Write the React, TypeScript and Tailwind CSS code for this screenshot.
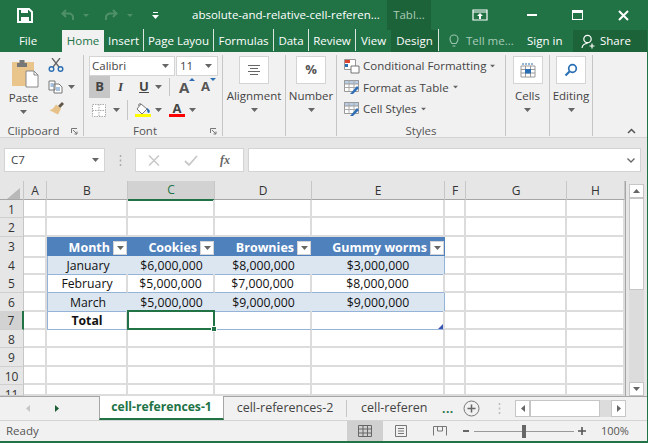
import * as React from "react";

const Caret = ({ className = "" }: { className?: string }) => (
  <svg width="7" height="4" viewBox="0 0 7 4" className={`shrink-0 ${className}`}>
    <path d="M0 0h7L3.500 4z" fill="#666" />
  </svg>
);

function Separator() {
  return <div className="w-px h-[22px] shrink-0 bg-[#d8e6de] self-end mb-[1px]" />;
}

function RibbonTab({ label, width, dark }: { label: string; width: string; dark?: boolean }) {
  return (
    <div className={`${width} shrink-0 flex items-center justify-center text-[11.500px] text-white whitespace-nowrap ${dark ? "bg-[#1d6339]" : ""}`}>
      {label}
    </div>
  );
}

function TitleBar() {
  return (
    <div className="h-[30px] shrink-0 flex items-center bg-[#217346] text-white">
      <svg width="16" height="15" viewBox="0 0 16 15" className="ml-[17px] shrink-0">
        <path d="M1 1h11l3 3v10H1z" fill="none" stroke="#fff" strokeWidth="2" />
        <rect x="4" y="1" width="7" height="4" fill="#fff" />
        <rect x="4" y="9" width="8" height="5" fill="#fff" />
      </svg>
      <svg width="14" height="12" viewBox="0 0 14 12" className="ml-[28px] shrink-0">
        <path d="M5 1 1.500 4.500 5 8M2 4.500h6a4 4 0 0 1 4 4V11" fill="none" stroke="#4f9069" strokeWidth="2" />
      </svg>
      <svg width="6" height="3" viewBox="0 0 6 3" className="ml-[8px] shrink-0"><path d="M0 0h6L3 3z" fill="#4f9069" /></svg>
      <svg width="14" height="12" viewBox="0 0 14 12" className="ml-[15px] shrink-0">
        <path d="M9 1l3.500 3.500L9 8M12 4.500H6a4 4 0 0 0-4 4V11" fill="none" stroke="#4f9069" strokeWidth="2" />
      </svg>
      <svg width="6" height="3" viewBox="0 0 6 3" className="ml-[9px] shrink-0"><path d="M0 0h6L3 3z" fill="#4f9069" /></svg>
      <svg width="7" height="7" viewBox="0 0 7 7" className="ml-[19px] shrink-0">
        <path d="M1 0h5v1H1zM0 3h7L3.500 7z" fill="#fff" />
      </svg>
      <div className="ml-[33px] w-[195px] shrink-0 text-[11.500px] whitespace-nowrap">absolute-and-relative-cell-referen...</div>
      <div className="w-[44px] h-full shrink-0 bg-[#1d6339] flex items-center justify-center text-[11.500px] text-[#a9cbb7]">Tabl...</div>
      <svg width="16" height="13" viewBox="0 0 16 13" className="ml-[41px] shrink-0">
        <path d="M1 1h14v10H1zM1 3h14" fill="none" stroke="#fff" strokeWidth="1.200" />
        <path d="M8 4l3 3H9v3H7V7H5z" fill="#fff" />
      </svg>
      <div className="ml-[39px] w-[10px] h-[2px] bg-white shrink-0" />
      <div className="ml-[35px] w-[11px] h-[10px] border border-white border-t-[3px] shrink-0" />
      <svg width="11" height="11" viewBox="0 0 11 11" className="ml-[35px] shrink-0">
        <path d="M1 1l9 9M10 1l-9 9" stroke="#fff" strokeWidth="2" />
      </svg>
    </div>
  );
}

function TabRow() {
  return (
    <div className="h-[22px] shrink-0 flex bg-[#217346] text-white">
      <RibbonTab label="File" width="w-[56px]" />
      <div className="w-[6px] shrink-0" />
      <div className="w-[42px] shrink-0 flex items-center justify-center text-[11.500px] text-[#217346] bg-[#f1f1f1]">Home</div>
      <RibbonTab label="Insert" width="w-[39px]" />
      <Separator />
      <RibbonTab label="Page Layou" width="w-[69px]" />
      <Separator />
      <RibbonTab label="Formulas" width="w-[59px]" />
      <Separator />
      <RibbonTab label="Data" width="w-[34px]" />
      <Separator />
      <RibbonTab label="Review" width="w-[46px]" />
      <Separator />
      <RibbonTab label="View" width="w-[35px]" />
      <RibbonTab label="Design" width="w-[47px]" dark />
      <Separator />
      <div className="w-[10px] shrink-0" />
      <svg width="10" height="14" viewBox="0 0 10 14" className="self-center shrink-0">
        <path d="M3 9.500C2 8 1 7.500 1 5a4 4 0 0 1 8 0c0 2.500-1 3-2 4.500zM3.500 12h3" fill="none" stroke="#9cc4ad" strokeWidth="1.100" />
      </svg>
      <div className="ml-[7px] w-[53px] shrink-0 text-[11.500px] text-[#a9cbb7] flex items-center whitespace-nowrap">Tell me...</div>
      <div className="ml-[8px] w-[46px] shrink-0 text-[11.500px] flex items-center whitespace-nowrap">Sign in</div>
      <div className="flex-1 h-full bg-[#1d6339] flex items-center gap-[4px] pl-[8px] text-[11.500px]">
        <svg width="15" height="15" viewBox="0 0 15 15" className="shrink-0">
          <circle cx="6.500" cy="5" r="3.700" fill="none" stroke="#fff" strokeWidth="1.200" />
          <path d="M1 14c.5-3 2-4.500 5.500-4.500M11 9.500v5M8.500 12h5" fill="none" stroke="#fff" strokeWidth="1.200" />
        </svg>
        Share
      </div>
    </div>
  );
}

const Launcher = () => (
  <svg width="7" height="7" viewBox="0 0 7 7" className="shrink-0">
    <path d="M.5 5V.5H6M2 2l4 4M6 3.500V6H3.500" fill="none" stroke="#777" strokeWidth="1" />
  </svg>
);

function Group({
  width,
  label,
  launcher,
  children,
}: {
  width: string;
  label: string;
  launcher?: boolean;
  children: React.ReactNode;
}) {
  return (
    <div className={`${width} shrink-0 flex flex-col border-r border-[#c6c6c6] mt-[3px] mb-[1px]`}>
      <div className="flex-1 min-h-0">{children}</div>
      <div className={`relative h-[10px] flex items-center justify-center text-[11.500px] leading-[10px] text-[#555] ${launcher ? "pr-[16px]" : ""}`}>
        {label}
        {launcher && (
          <div className="absolute right-[5px] top-[2px]">
            <Launcher />
          </div>
        )}
      </div>
    </div>
  );
}

function BigButton({ label, icon }: { label: string; icon: React.ReactNode }) {
  return (
    <div className="flex flex-col items-center pt-[1px]">
      <div className="w-[30px] h-[28px] bg-white border border-[#d4d4d4] flex items-center justify-center">{icon}</div>
      <div className="mt-[3px] text-[11.500px] leading-[17px] text-[#444] whitespace-nowrap">{label}</div>
      <Caret className="mt-[4px]" />
    </div>
  );
}

function ClipboardGroup() {
  return (
    <Group width="w-[84px]" label="Clipboard" launcher>
      <div className="flex h-full">
        <div className="w-[47px] flex flex-col items-center pt-[4px]">
          <svg width="29" height="29" viewBox="0 0 29 29" className="ml-[4px]">
            <rect x="1" y="3" width="22" height="24" fill="#e9c58c" />
            <path d="M6 8V4h2.500V1h5v3H16v4z" fill="#777" />
            <path d="M15 12h8l4 4v12H15z" fill="#fff" stroke="#888" />
            <path d="M23 12v4h4" fill="none" stroke="#888" />
          </svg>
          <div className="mt-[1px] text-[11.500px] leading-[17px] text-[#444]">Paste</div>
          <Caret className="mt-[4px]" />
        </div>
        <div className="flex flex-col pl-[1px] pt-[3px]">
          <svg width="16" height="14" viewBox="0 0 16 14">
            <path d="M4 0l7 9M12 0 5 9" stroke="#666" strokeWidth="1.300" />
            <circle cx="3.500" cy="11" r="2.300" fill="none" stroke="#2a6fb4" strokeWidth="1.400" />
            <circle cx="12.500" cy="11" r="2.300" fill="none" stroke="#2a6fb4" strokeWidth="1.400" />
          </svg>
          <div className="mt-[8px] flex items-center gap-[5px]">
            <svg width="15" height="14" viewBox="0 0 15 14">
              <path d="M1 1h6v9H1zM6 4h5l3 3v6H6z" fill="#fff" stroke="#777" />
              <path d="M2.500 4h3M2.500 6h3M8 8h4M8 10h4" stroke="#4a86c0" />
            </svg>
            <Caret />
          </div>
          <svg width="17" height="15" viewBox="0 0 17 15" className="mt-[7px]">
            <path d="M10 5l4-4 2 2-4 4z" fill="#5f5648" />
            <path d="M8 3.500l5 4-3 6-9-4.500c3 0 5-2 7-5.500z" fill="#e6c288" />
          </svg>
        </div>
      </div>
    </Group>
  );
}

function FontGroup() {
  return (
    <Group width="w-[139px]" label="Font" launcher>
      <div className="pl-[5px] pt-[1px]">
        <div className="flex gap-[1px] h-[20px]">
          <div className="w-[86px] bg-white border border-[#d4d4d4] flex items-center justify-between px-[2px] pr-[5px] text-[11.500px] text-[#444]">
            Calibri
            <Caret />
          </div>
          <div className="w-[42px] bg-white border border-[#d4d4d4] flex items-center justify-between px-[3px] pr-[5px] text-[11.500px] text-[#444]">
            11
            <Caret />
          </div>
        </div>
        <div className="flex items-center h-[22px] text-[#444]">
          <div className="w-[21px] h-[22px] bg-[#c6c6c6] flex items-center justify-center font-bold text-[13px]">B</div>
          <div className="w-[21px] text-center italic font-bold text-[13px] font-['Liberation_Serif',serif]">I</div>
          <div className="w-[22px] ml-[2px] text-center underline font-bold text-[13px]">U</div>
          <Caret />
          <div className="w-px h-[18px] ml-[7px] bg-[#c6c6c6]" />
          <div className="ml-[9px] w-[18px] text-[15px] font-bold flex items-start text-[#555]">
            A
            <svg width="6" height="3" viewBox="0 0 6 3" className="mt-[2px]"><path d="M3 0l3 3H0z" fill="#2a6fb4" /></svg>
          </div>
          <div className="ml-[4px] w-[16px] text-[13px] font-bold flex items-start text-[#555]">
            A
            <svg width="6" height="3" viewBox="0 0 6 3" className="mt-[1px]"><path d="M0 0h6L3 3z" fill="#2a6fb4" /></svg>
          </div>
        </div>
        <div className="flex items-center h-[24px]">
          <svg width="14" height="13" viewBox="0 0 14 13" className="ml-[3px]">
            <path d="M.5.500h13v12H.5zM7 .5v12M.5 6.500h13" fill="#fff" stroke="#aaa" strokeDasharray="1.500 1" />
          </svg>
          <Caret className="ml-[7px]" />
          <div className="w-px h-[20px] ml-[7px] bg-[#c6c6c6]" />
          <div className="ml-[7px] w-[16px] flex flex-col items-center">
            <svg width="16" height="11" viewBox="0 0 16 11">
              <path d="M6 1l6 5-5 5-5-5z" fill="#fff" stroke="#777" />
              <path d="M4 3c-1-1 0-3 2-2" fill="none" stroke="#777" />
              <path d="M12 5c2 1 3.500 3 2.500 4.500S11.500 9 12 5z" fill="#2a6fb4" />
            </svg>
            <div className="w-[16px] h-[3px] bg-[#ffff00]" />
          </div>
          <Caret className="ml-[4px]" />
          <div className="ml-[7px] w-[16px] flex flex-col items-center">
            <div className="text-[13px] leading-[11px] font-bold text-[#444]">A</div>
            <div className="w-[16px] h-[3px] bg-[#ff0000]" />
          </div>
          <Caret className="ml-[4px]" />
        </div>
      </div>
    </Group>
  );
}

function StyleRow({ label, icon }: { label: string; icon: React.ReactNode }) {
  return (
    <div className="h-[21.500px] flex items-center gap-[3px] text-[11.500px] text-[#444] whitespace-nowrap">
      {icon}
      {label}
      <Caret className="scale-75" />
    </div>
  );
}

const TableIcon = () => (
  <svg width="16" height="16" viewBox="0 0 16 16" className="shrink-0">
    <path d="M.5 1.500h14v11H.5z" fill="#fff" stroke="#999" />
    <path d="M.5 1.500h14V5H.5z" fill="#b9cde4" stroke="#999" />
    <path d="M.5 8.500h14M5 1.500v11M10 1.500v11" stroke="#aaa" />
    <path d="M6 15l7-8 2 2-6 6z" fill="#2f6fb5" />
  </svg>
);

function Ribbon() {
  return (
    <div className="h-[86px] shrink-0 flex bg-[#f1f1f1] border-b border-[#d4d4d4]">
      <ClipboardGroup />
      <FontGroup />
      <Group width="w-[63px]" label="">
        <BigButton
          label="Alignment"
          icon={
            <svg width="14" height="10" viewBox="0 0 14 10">
              <path d="M1 .5h12M3 3.500h8M1 6.500h12M3 9.500h8" stroke="#666" />
            </svg>
          }
        />
      </Group>
      <Group width="w-[51px]" label="">
        <BigButton label="Number" icon={<span className="text-[13px] font-bold text-[#555]">%</span>} />
      </Group>
      <Group width="w-[169px]" label="Styles">
        <div className="pl-[7px]">
          <StyleRow
            label="Conditional Formatting"
            icon={
              <svg width="16" height="16" viewBox="0 0 16 16" className="shrink-0">
                <path d="M.5 1.500h11v10H.5z" fill="#fff" stroke="#999" />
                <path d="M1 2h5v3H1z" fill="#d9432f" />
                <path d="M1 6h3v3H1z" fill="#2a6fb4" />
                <path d="M7 8h8v7H7z" fill="#fff" stroke="#777" />
              </svg>
            }
          />
          <StyleRow label="Format as Table" icon={<TableIcon />} />
          <StyleRow label="Cell Styles" icon={<TableIcon />} />
        </div>
      </Group>
      <Group width="w-[44px]" label="">
        <BigButton
          label="Cells"
          icon={
            <svg width="16" height="15" viewBox="0 0 16 15">
              <path d="M1 3h14v11H1zM1 6.500h14M1 10h14M5.500 3v11M10.500 3v11" fill="#fff" stroke="#999" />
              <rect x="5" y="6" width="6" height="4.500" fill="#2a6fb4" />
              <path d="M2 1h12" stroke="#2a6fb4" strokeDasharray="2 1" />
            </svg>
          }
        />
      </Group>
      <Group width="w-[43px]" label="">
        <BigButton
          label="Editing"
          icon={
            <svg width="14" height="14" viewBox="0 0 14 14">
              <circle cx="8.500" cy="5.500" r="3.800" fill="none" stroke="#2a6fb4" strokeWidth="1.700" />
              <path d="M5.500 8.500 1.500 12.500" stroke="#2a6fb4" strokeWidth="2.200" />
            </svg>
          }
        />
      </Group>
      <div className="flex-1 flex items-end justify-end pr-[11px] pb-[3px]">
        <svg width="9" height="6" viewBox="0 0 9 6">
          <path d="M1 5l3.500-3.500L8 5" fill="none" stroke="#555" strokeWidth="1.500" />
        </svg>
      </div>
    </div>
  );
}

function FormulaBar() {
  return (
    <div className="h-[43px] shrink-0 flex items-center bg-[#e6e6e6] pl-[4px] pr-[6px] pt-[1px]">
      <div className="w-[101px] h-[24px] shrink-0 bg-white border border-[#d4d4d4] flex items-center justify-between pl-[6px] pr-[5px] text-[11.500px] text-[#444]">
        C7
        <Caret />
      </div>
      <svg width="3" height="11" viewBox="0 0 3 11" className="ml-[14px] shrink-0">
        <path d="M1.500 0v2M1.500 4.500v2M1.500 9v2" stroke="#aaa" strokeWidth="1.500" />
      </svg>
      <div className="ml-[13px] w-[109px] h-[24px] bg-white border border-[#d4d4d4] flex items-center shrink-0">
        <svg width="12" height="11" viewBox="0 0 12 11" className="ml-[12px] shrink-0">
          <path d="M1 .5l10 10M11 .5l-10 10" stroke="#c8c8c8" strokeWidth="1.500" />
        </svg>
        <svg width="14" height="11" viewBox="0 0 14 11" className="ml-[24px] shrink-0">
          <path d="M1 6l4 4 8-9" fill="none" stroke="#c8c8c8" strokeWidth="1.800" />
        </svg>
        <span className="ml-[22px] text-[12px] italic font-bold text-[#666] font-['Liberation_Serif',serif]">fx</span>
      </div>
      <div className="ml-[4px] flex-1 h-[24px] bg-white border border-[#d4d4d4] flex items-center justify-end pr-[5px]">
        <svg width="8" height="5" viewBox="0 0 8 5">
          <path d="M.5.500 4 4 7.500.5" fill="none" stroke="#666" strokeWidth="1.300" />
        </svg>
      </div>
    </div>
  );
}

const columns = ["", "A", "B", "C", "D", "E", "F", "G", "H"];
const rowHeights = ["h-[18px]", "h-[19px]", "h-[19px]", "h-[18px]", "h-[19px]", "h-[18px]", "h-[19px]", "h-[18px]", "h-[19px]", "h-[18px]", "h-[11px]"];
const tableHead = ["Month", "Cookies", "Brownies", "Gummy worms"];
const tableBody: Record<number, string[]> = {
  4: ["January", "$6,000,000", "$8,000,000", "$3,000,000"],
  5: ["February", "$5,000,000", "$7,000,000", "$8,000,000"],
  6: ["March", "$5,000,000", "$9,000,000", "$9,000,000"],
  7: ["Total", "", "", ""],
};

function FilterButton() {
  return (
    <div className="w-[14px] h-[14px] shrink-0 bg-white border border-[#d4d4d4] flex items-center justify-center">
      <Caret />
    </div>
  );
}

function DataCell({ row, col }: { row: number; col: number }) {
  const idx = col - 2;
  const inTable = idx >= 0 && idx < 4 && row >= 3 && row <= 7;
  if (!inTable) {
    return <div className="border-r-2 border-b-2 border-[#dcdcdc]" />;
  }
  if (row === 3) {
    return (
      <div className="bg-[#4f81bd] flex items-center justify-end gap-[3px] pr-[1px] text-[12.500px] leading-[20px] font-bold text-white whitespace-nowrap">
        <span className="pt-[1px]">{tableHead[idx]}</span>
        <FilterButton />
      </div>
    );
  }
  const stripe = row === 4 || row === 6;
  return (
    <div
      className={`relative flex items-center justify-center pt-[2px] text-[12.250px] leading-[16px] text-[#111] border-b border-[#95b3d7] ${
        stripe ? "bg-[#dce6f1]" : "border-r-2 border-r-[#dcdcdc]"
      } ${idx === 0 ? "border-l border-l-[#95b3d7]" : ""} ${idx === 3 ? "border-r border-r-[#95b3d7]" : ""} ${
        row === 7 && idx === 0 ? "font-bold" : ""
      }`}
    >
      {tableBody[row][idx]}
      {row === 7 && idx === 1 && (
        <div className="absolute -left-px -top-px -right-[2px] -bottom-px border-2 border-[#217346] z-10">
          <div className="absolute -right-[4px] -bottom-[4px] w-[6px] h-[6px] bg-[#217346] border border-white" />
        </div>
      )}
      {row === 7 && idx === 3 && (
        <svg width="5" height="5" viewBox="0 0 5 5" className="absolute right-0 bottom-0">
          <path d="M5 0v5H0z" fill="#3a55b4" />
        </svg>
      )}
    </div>
  );
}

function Sheet() {
  return (
    <div className="h-[215px] shrink-0 flex bg-[#e6e6e6]">
      <div className="w-[625px] shrink-0 overflow-hidden">
        <div className="grid grid-cols-[24px_23px_81px_87px_97px_133px_21px_101px_58px] h-[19px] border-b border-[#a6a6a6]">
          {columns.map((c, i) =>
            i === 0 ? (
              <div key="corner" className="flex items-end justify-end pr-[3px] pb-[2px] border-r border-[#c6c6c6]">
                <svg width="13" height="11" viewBox="0 0 13 11"><path d="M13 0v11H0z" fill="#b8b8b8" /></svg>
              </div>
            ) : (
              <div
                key={c}
                className={`flex items-center justify-center text-[12px] border-r border-[#c6c6c6] ${
                  c === "C" ? "bg-[#d2d2d2] text-[#217346] border-b-2 border-b-[#217346]" : "text-[#333]"
                }`}
              >
                {c}
              </div>
            ),
          )}
        </div>
        {rowHeights.map((h, r) => {
          const row = r + 1;
          return (
            <div key={row} className={`grid grid-cols-[24px_23px_81px_87px_97px_133px_21px_101px_58px] ${h} bg-white`}>
              <div
                className={`overflow-hidden flex justify-center pt-[1px] text-[12px] leading-[18px] text-[#333] border-b border-[#cfcfcf] ${
                  row === 7 ? "bg-[#d2d2d2] border-r-2 border-r-[#217346]" : "bg-[#e6e6e6] border-r border-r-[#c6c6c6]"
                }`}
              >
                {row}
              </div>
              {[1, 2, 3, 4, 5, 6, 7, 8].map((col) => (
                <DataCell key={col} row={row} col={col} />
              ))}
            </div>
          );
        })}
      </div>
      <div className="flex-1 flex flex-col border-l border-[#a6a6a6] bg-[#e6e6e6] pl-[3px] pr-[3px] pt-[3px]">
        <div className="h-[14px] bg-white border border-[#c6c6c6] flex items-center justify-center">
          <svg width="7" height="4" viewBox="0 0 7 4"><path d="M3.500 0 7 4H0z" fill="#666" /></svg>
        </div>
        <div className="h-[92px] bg-white border border-[#c6c6c6]" />
        <div className="flex-1 bg-[#dcdcdc]" />
        <div className="h-[14px] bg-white border border-[#c6c6c6] flex items-center justify-center">
          <Caret />
        </div>
      </div>
    </div>
  );
}

function SheetTabs() {
  return (
    <div className="h-[25px] shrink-0 flex bg-[#f1f1f1] border-t border-[#a6a6a6] border-b border-b-[#d4d4d4]">
      <div className="w-[99px] flex items-center shrink-0">
        <svg width="4" height="7" viewBox="0 0 4 7" className="ml-[26px]"><path d="M4 0v7L0 3.500z" fill="#c6c6c6" /></svg>
        <svg width="4" height="7" viewBox="0 0 4 7" className="ml-[25px]"><path d="M0 0v7l4-3.500z" fill="#1f5c38" /></svg>
      </div>
      <div className="w-[125px] shrink-0 -mt-px bg-white border-x border-[#a6a6a6] border-b-2 border-b-[#217346] flex items-center justify-center text-[12.200px] font-bold text-[#217346]">
        cell-references-1
      </div>
      <div className="w-[123px] shrink-0 flex items-center justify-center text-[12.500px] text-[#444] whitespace-nowrap border-r border-[#c6c6c6] my-[3px]">
        cell-references-2
      </div>
      <div className="ml-[14px] w-[80px] shrink-0 flex items-center text-[12.500px] text-[#444] whitespace-nowrap">
        cell-referen
      </div>
      <div className="ml-[1px] w-[12px] shrink-0 flex items-center text-[12px] font-bold text-[#217346] tracking-[0.5px]">...</div>
      <svg width="17" height="17" viewBox="0 0 17 17" className="ml-[9px] shrink-0 self-center">
        <circle cx="8.500" cy="8.500" r="7.500" fill="none" stroke="#777" />
        <path d="M4.500 8.500h8M8.500 4.500v8" stroke="#666" strokeWidth="1.500" />
      </svg>
      <svg width="3" height="11" viewBox="0 0 3 11" className="ml-[18px] shrink-0 self-center">
        <path d="M1.500 0v2M1.500 4.500v2M1.500 9v2" stroke="#bbb" strokeWidth="1.500" />
      </svg>
      <div className="ml-[14px] flex-1 mr-[21px] flex items-center bg-[#dcdcdc] my-[3px]">
        <div className="w-[15px] h-full bg-white border border-[#c6c6c6] flex items-center justify-center">
          <svg width="4" height="7" viewBox="0 0 4 7"><path d="M4 0v7L0 3.500z" fill="#666" /></svg>
        </div>
        <div className="w-[70px] h-full bg-white border border-[#c6c6c6]" />
        <div className="flex-1" />
        <div className="w-[15px] h-full bg-white border border-[#c6c6c6] flex items-center justify-center">
          <svg width="4" height="7" viewBox="0 0 4 7"><path d="M0 0v7l4-3.500z" fill="#666" /></svg>
        </div>
      </div>
    </div>
  );
}

function StatusBar() {
  return (
    <div className="h-[22px] shrink-0 flex items-stretch bg-[#f1f1f1] border-b-2 border-[#217346] text-[11.500px] text-[#555]">
      <div className="w-[347px] pl-[6px] flex items-center">Ready</div>
      <div className="w-[36px] bg-[#d0d0d0] flex items-center justify-center">
        <svg width="14" height="12" viewBox="0 0 14 12">
          <path d="M.5.500h13v11H.5zM.5 4h13M.5 8h13M5 .5v11M9.500.5v11" fill="none" stroke="#666" />
        </svg>
      </div>
      <div className="w-[36px] flex items-center justify-center">
        <svg width="12" height="12" viewBox="0 0 12 12">
          <path d="M.5.500h11v11H.5zM3 3.500h6M3 6h6M3 8.500h6" fill="none" stroke="#777" />
        </svg>
      </div>
      <div className="w-[42px] flex items-center justify-center">
        <svg width="14" height="10" viewBox="0 0 14 10">
          <path d="M.5 9.500V.5h13v9M4.500.5V5h5V.5" fill="none" stroke="#777" />
        </svg>
      </div>
      <div className="ml-[2px] w-[138px] flex items-center">
        <div className="w-[6px] h-[2px] bg-[#666]" />
        <div className="relative ml-[5px] w-[100px] h-px bg-[#999]">
          <div className="absolute left-[48px] -top-[6px] w-[4px] h-[13px] bg-[#666]" />
        </div>
        <svg width="8" height="8" viewBox="0 0 8 8" className="ml-[4px]">
          <path d="M0 4h8M4 0v8" stroke="#555" strokeWidth="1.600" />
        </svg>
      </div>
      <div className="flex items-center text-[11px]">100%</div>
    </div>
  );
}

export default function App() {
  return (
    <div className="w-[648px] h-[443px] overflow-hidden flex flex-col bg-[#e6e6e6] border-r border-[#217346] font-['Open_Sans','Noto_Sans',sans-serif]">
      <TitleBar />
      <TabRow />
      <Ribbon />
      <FormulaBar />
      <Sheet />
      <SheetTabs />
      <StatusBar />
    </div>
  );
}
